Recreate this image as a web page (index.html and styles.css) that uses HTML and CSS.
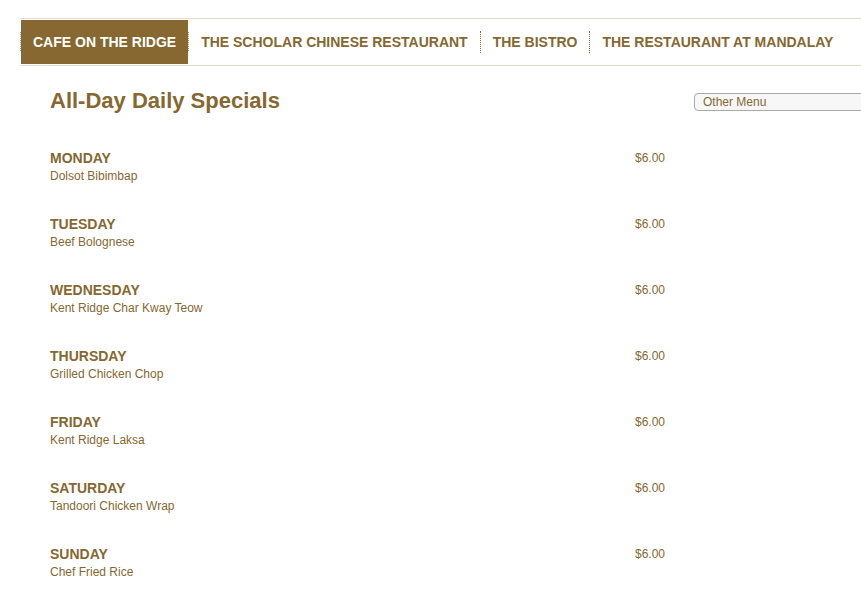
FILE: index.html
```html
<!DOCTYPE html>
<html>
<head>
    <meta charset="utf-8">
    <title>All-Day Daily Specials</title>
    <link rel="stylesheet" href="styles.css">
</head>
<body>
    <div class="page">
        <ul class="outlets">
            <li class="active"><a href="#">Cafe on the Ridge</a></li>
            <li><a href="#">The Scholar Chinese Restaurant</a></li>
            <li><a href="#">The Bistro</a></li>
            <li><a href="#">The Restaurant at Mandalay</a></li>
        </ul>

        <div class="menu">
            <div class="menu-head">
                <h1>All-Day Daily Specials</h1>
                <select class="other-menu">
                    <option>Other Menu</option>
                </select>
            </div>

            <div class="specials">
                <div class="day">
                    <div class="dish"><h3>Monday</h3><p>Dolsot Bibimbap</p></div>
                    <div class="price">$6.00</div>
                </div>
                <div class="day">
                    <div class="dish"><h3>Tuesday</h3><p>Beef Bolognese</p></div>
                    <div class="price">$6.00</div>
                </div>
                <div class="day">
                    <div class="dish"><h3>Wednesday</h3><p>Kent Ridge Char Kway Teow</p></div>
                    <div class="price">$6.00</div>
                </div>
                <div class="day">
                    <div class="dish"><h3>Thursday</h3><p>Grilled Chicken Chop</p></div>
                    <div class="price">$6.00</div>
                </div>
                <div class="day">
                    <div class="dish"><h3>Friday</h3><p>Kent Ridge Laksa</p></div>
                    <div class="price">$6.00</div>
                </div>
                <div class="day">
                    <div class="dish"><h3>Saturday</h3><p>Tandoori Chicken Wrap</p></div>
                    <div class="price">$6.00</div>
                </div>
                <div class="day">
                    <div class="dish"><h3>Sunday</h3><p>Chef Fried Rice</p></div>
                    <div class="price">$6.00</div>
                </div>
            </div>
        </div>
    </div>
</body>
</html>
```

FILE: styles.css
```css
html, body {
    margin: 0;
    padding: 0;
    background: #fff;
    overflow: hidden;
}
body {
    font-family: "Liberation Sans", Arial, sans-serif;
    color: #866830;
}
.page {
    padding: 18px 0 0 20px;
}
.outlets {
    list-style: none;
    margin: 0;
    padding: 1px 0;
    display: flex;
    border-top: 1px solid #e6d8cc;
    border-bottom: 1px solid #e6d8cc;
}
.outlets li {
    position: relative;
    padding-left: 1px;
}
.outlets li::before {
    content: "";
    position: absolute;
    left: 0;
    top: 11px;
    bottom: 11px;
    border-left: 1px dotted #866830;
}
.outlets li:first-child::before,
.outlets li.active + li::before {
    top: 12px;
    bottom: 13px;
    border-left-color: #b9a57f;
}
.outlets a {
    display: block;
    padding: 0 12px;
    line-height: 44px;
    font-size: 14px;
    font-weight: bold;
    text-transform: uppercase;
    text-decoration: none;
    color: #866830;
}
.outlets li.active a {
    background: #866830;
    color: #fff;
}
.menu {
    padding: 0 0 0 30px;
}
.menu-head {
    display: flex;
    align-items: flex-start;
    margin-top: 23px;
}
.menu-head h1 {
    flex-shrink: 0;
    margin: 0;
    width: 644px;
    font-size: 22px;
    line-height: 24px;
}
.other-menu {
    flex-shrink: 0;
    margin-top: 4px;
    width: 200px;
    height: 18px;
    padding: 0 0 0 8px;
    font-family: "Liberation Sans", Arial, sans-serif;
    font-size: 12px;
    color: #866830;
    background: #f7f7f7;
    border: 1px solid #a9a9a9;
    border-radius: 4px;
    appearance: none;
}
.specials {
    margin-top: 37px;
}
.day {
    display: flex;
    height: 66px;
}
.dish {
    width: 585px;
}
.day h3 {
    margin: 0;
    font-size: 14px;
    line-height: 16px;
    text-transform: uppercase;
}
.day p {
    margin: 3px 0 0;
    font-size: 12px;
    line-height: 14px;
}
.price {
    font-size: 12px;
    line-height: 16px;
}
```
